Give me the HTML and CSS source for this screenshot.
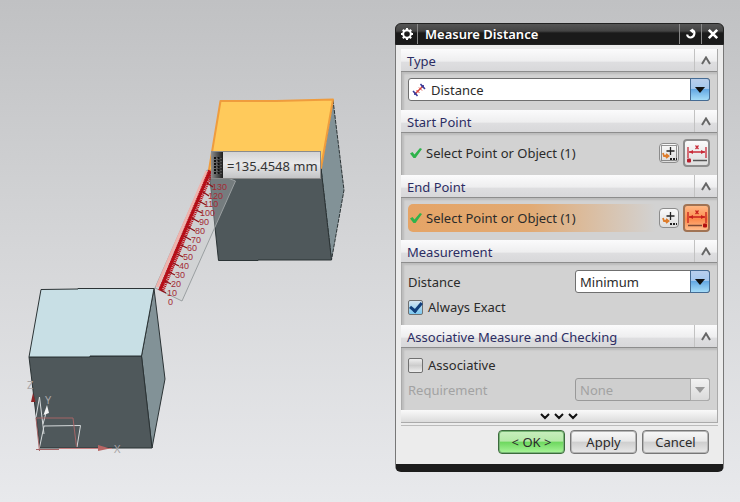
FILE: index.html
```
<!DOCTYPE html>
<html lang="en">
<head>
<meta charset="utf-8">
<title>Measure Distance</title>
<link rel="stylesheet" href="styles.css">
</head>
<body>
<main class="workspace">
  <svg class="scene" viewBox="0 0 395 502" preserveAspectRatio="xMinYMin meet" role="img" aria-label="Two solids with a measurement ruler">
    <defs>
      <linearGradient id="tag" x1="0" y1="0" x2="0" y2="1"><stop offset="0" stop-color="#d2d2d3"/><stop offset=".45" stop-color="#e9e9ea"/><stop offset="1" stop-color="#c2c3c5"/></linearGradient>
      <linearGradient id="grip" x1="0" y1="0" x2="1" y2="0"><stop offset="0" stop-color="#858585"/><stop offset="1" stop-color="#1d1d1d"/></linearGradient>
    </defs>
    <g stroke="#2b3335" stroke-width="1" stroke-linejoin="round">
      <path fill="#829297" stroke-dasharray="4 1" d="M333 100L344 190L331.500 260L321 168Z"/>
      <path fill="#4f585b" d="M209 170L321 168L331.500 260H258V260.500H218.500Z"/>
      <path fill="#ffca5b" stroke="#ef9c3d" stroke-width="2" d="M220.500 101H276L333 99.500L321 168L209 170Z"/>
      <path fill="#829297" d="M154 288.500L165 379L152 448L141.500 356Z"/>
      <path fill="#4f585b" d="M29 357L141.500 356L152 448H40Z"/>
      <path fill="#c8dfe5" d="M41 289.500L78 289V288.500H154L141.500 356H90V357H29Z"/>
    </g>
    <g fill="none" stroke="#d6dadb" stroke-width="1">
      <path d="M39 450L44 426L80.500 425.500L77 447M36 417L39.500 397L44 434M43 424L46 413"/>
    </g>
    <g fill="none" stroke="#a56566">
      <path d="M36 418H73L76.500 447M36 418L39.500 451M36 449.500H59"/>
      <path stroke="#c47f80" d="M59 448.500H112"/>
    </g>
    <path fill="#b76564" d="M98 445L110 448.500L98 451Z"/>
    <path fill="#8d2527" d="M33 393L35.500 402H31Z"/>
    <path fill="#f4f5f5" d="M47 405L49 413L43.500 415Z"/>
    <g class="axis"><text x="114" y="453">X</text><text x="45" y="404">Y</text><text x="27" y="389">Z</text></g>

    <path fill="#c7cacb" fill-opacity=".32" stroke="#9a9fa1" d="M207 170L235.500 181L182 301L155 288Z"/>
    <path fill="none" stroke="#f0b3ad" stroke-width="3" d="M207 171L157 287"/>
    <path fill="none" stroke="#a80c14" stroke-width="3" d="M210 171L160 290"/>
    <path fill="none" stroke="#bd101a" stroke-width="6" stroke-dasharray="1.200 .7" d="M211 171L161 291"/>
    <path fill="none" stroke="#8a1119" stroke-width="1.300" d="M161 290L166 293M165 281L171 284M169 272L175 275M173 263L179 266M177 254L183 257M181 245L187 248M184 236L191 240M188 227L195 231M192 218L199 222M196 210L202 213M199 201L206 205M203 192L209 196M207 183L213 187"/>
    <g class="ticks">
      <text x="168" y="305">0</text><text x="167" y="296">10</text><text x="171" y="287">20</text><text x="175" y="278">30</text><text x="179" y="269">40</text><text x="183" y="260">50</text><text x="187" y="251">60</text><text x="191" y="243">70</text><text x="195" y="234">80</text><text x="199" y="225">90</text><text x="200" y="216">100</text><text x="204" y="207">110</text><text x="208" y="199">120</text><text x="212" y="190">130</text>
    </g>
    <rect x="211.500" y="151.500" width="109" height="27" fill="url(#tag)" stroke="#8b8b8b"/>
    <rect x="212" y="152" width="11" height="26" fill="url(#grip)"/>
    <path stroke="#111" stroke-width="2" stroke-dasharray="2 1" d="M215 157V174M218.500 157V174"/>
    <path stroke="#777" stroke-width="1" stroke-dasharray="1 2" d="M217 158V174M221 158V174"/>
    <text class="readout" x="227" y="171">=135.4548 mm</text>
  </svg>

  <form class="dialog">
    <header class="titlebar">
      <button type="button" class="tb-btn gear" aria-label="Options">
        <svg width="14" height="14" viewBox="0 0 14 14"><circle cx="7" cy="7" r="3.800" fill="none" stroke="#fff" stroke-width="2"/><path stroke="#fff" stroke-width="2" d="M7 1V3M7 11V13M1 7H3M11 7H13M2.800 2.800L4.200 4.200M9.800 9.800L11.200 11.200M11.200 2.800L9.800 4.200M4.200 9.800L2.800 11.200"/></svg>
      </button>
      <h1>Measure Distance</h1>
      <button type="button" class="tb-btn" aria-label="Reset">
        <svg width="12" height="12" viewBox="0 0 12 12"><path fill="none" stroke="#fff" stroke-width="2.200" d="M6.500 2.500H8C10.500 4 9.500 9.500 5.500 9.500C3.500 9.500 2.200 8 2.200 6.500"/><path fill="#fff" d="M4.500 2.500L8 .500V5.500Z"/></svg>
      </button>
      <button type="button" class="tb-btn" aria-label="Close">
        <svg width="12" height="12" viewBox="0 0 12 12"><path stroke="#fff" stroke-width="2.600" d="M1.800 1.800L10.200 10.200M10.200 1.800L1.800 10.200"/></svg>
      </button>
    </header>

    <div class="sheet">
      <section>
        <div class="head"><h2>Type</h2><button type="button" class="fold" aria-label="Collapse Type"><svg width="10" height="9" viewBox="0 0 10 9"><path d="M1 8L5 1.500L9 8"/></svg></button></div>
        <div class="group type">
          <span class="combo">
            <svg class="lead" width="14" height="14" viewBox="0 0 14 14"><path stroke="#3a3a9a" stroke-width="1.500" d="M1 8L5.500 13M8.500 1L13 6"/><path stroke="#d8453c" stroke-width="1.500" d="M3 11L11 3"/><path stroke="#d8453c" d="M4.500 7L7.500 10M7 4.500L10 7.500"/><path fill="#3a3a9a" d="M2 12L2.500 8.500L5.500 11.500ZM12 2L8.500 2.500L11.500 5.500Z"/></svg>
            <select class="with-icon" aria-label="Type"><option>Distance</option></select>
            <span class="arrow"><svg width="10" height="6" viewBox="0 0 10 6"><path d="M0 0H10L5 6Z"/></svg></span>
          </span>
        </div>
      </section>

      <section>
        <div class="head"><h2>Start Point</h2><button type="button" class="fold" aria-label="Collapse Start Point"><svg width="10" height="9" viewBox="0 0 10 9"><path d="M1 8L5 1.500L9 8"/></svg></button></div>
        <div class="group">
          <div class="pick">
            <svg class="check" width="12" height="12" viewBox="0 0 12 12"><path d="M0 6.500L2.500 5L4.500 7.500L10 1L12 2L5.500 11H3.500Z"/></svg>
            <span class="pick-text">Select Point or Object (1)</span>
            <button type="button" class="tool small" aria-label="Point dialog">
              <svg width="18" height="18" viewBox="0 0 18 18"><rect x="1.500" y="1.500" width="15" height="15" fill="none" stroke="#333" stroke-dasharray="1 1"/><path stroke="#222" stroke-width="1.300" d="M10.500 3V11M6.500 7H14.500"/><path fill="none" stroke="#de7d2c" stroke-width="1.800" d="M3 9L4 12H8M6 14L8.500 12L6 10"/><path stroke="#222" stroke-width="2" stroke-dasharray="2 1" d="M10 15H17"/></svg>
            </button>
            <button type="button" class="tool" aria-label="Start point">
              <svg width="24" height="24" viewBox="0 0 24 24"><path fill="none" stroke="#c92b39" stroke-width="1.300" d="M3 6V17M21 6V17M4 11H20"/><path fill="#c92b39" d="M4 11L8 9V13ZM20 11L16 9V13Z"/><path stroke="#c92b39" stroke-width="1.200" d="M10.500 4.500L13.500 8M13.500 4.500L10.500 8"/><rect x="2" y="17.500" width="4" height="4" rx="1" fill="#b81d2c"/><path stroke="#555" stroke-width="1.500" d="M8 19.500H22"/></svg>
            </button>
          </div>
        </div>
      </section>

      <section>
        <div class="head"><h2>End Point</h2><button type="button" class="fold" aria-label="Collapse End Point"><svg width="10" height="9" viewBox="0 0 10 9"><path d="M1 8L5 1.500L9 8"/></svg></button></div>
        <div class="group">
          <div class="pick active">
            <svg class="check" width="12" height="12" viewBox="0 0 12 12"><path d="M0 6.500L2.500 5L4.500 7.500L10 1L12 2L5.500 11H3.500Z"/></svg>
            <span class="pick-text">Select Point or Object (1)</span>
            <button type="button" class="tool small" aria-label="Point dialog">
              <svg width="18" height="18" viewBox="0 0 18 18"><path stroke="#222" stroke-width="1.300" d="M10.500 3V11M6.500 7H14.500"/><path fill="none" stroke="#de7d2c" stroke-width="1.800" d="M3 9L4 12H8M6 14L8.500 12L6 10"/><path stroke="#222" stroke-width="2" stroke-dasharray="2 1" d="M10 15H17"/></svg>
            </button>
            <button type="button" class="tool on" aria-label="End point">
              <svg width="24" height="24" viewBox="0 0 24 24"><path fill="none" stroke="#c7201c" stroke-width="1.300" d="M3 6V17M21 6V17M4 11H20"/><path fill="#c7201c" d="M4 11L8 9V13ZM20 11L16 9V13Z"/><path stroke="#c7201c" stroke-width="1.200" d="M10.500 4.500L13.500 8M13.500 4.500L10.500 8"/><rect x="18" y="17.500" width="4" height="4" rx="1" fill="#b3100f"/><path stroke="#7d4a35" stroke-width="1.500" d="M3 19.500H17"/></svg>
            </button>
          </div>
        </div>
      </section>

      <section>
        <div class="head"><h2>Measurement</h2><button type="button" class="fold" aria-label="Collapse Measurement"><svg width="10" height="9" viewBox="0 0 10 9"><path d="M1 8L5 1.500L9 8"/></svg></button></div>
        <div class="group measure">
          <div class="row">
            <label for="distance">Distance</label>
            <span class="combo half">
              <select id="distance"><option>Minimum</option></select>
              <span class="arrow"><svg width="10" height="6" viewBox="0 0 10 6"><path d="M0 0H10L5 6Z"/></svg></span>
            </span>
          </div>
          <label class="tick"><input type="checkbox" checked>Always Exact</label>
        </div>
      </section>

      <section>
        <div class="head"><h2>Associative Measure and Checking</h2><button type="button" class="fold" aria-label="Collapse Associative Measure and Checking"><svg width="10" height="9" viewBox="0 0 10 9"><path d="M1 8L5 1.500L9 8"/></svg></button></div>
        <div class="group assoc">
          <label class="tick"><input type="checkbox">Associative</label>
          <div class="row off">
            <label for="requirement">Requirement</label>
            <span class="combo half">
              <select id="requirement" disabled><option>None</option></select>
              <span class="arrow"><svg width="10" height="6" viewBox="0 0 10 6"><path d="M0 0H10L5 6Z"/></svg></span>
            </span>
          </div>
        </div>
      </section>
      <button type="button" class="more" aria-label="More options"><svg width="38" height="7" viewBox="0 0 38 7"><path d="M1 1L5 5L9 1M15 1L19 5L23 1M29 1L33 5L37 1"/></svg></button>
    </div>

    <footer class="actions">
      <button type="button" class="action ok">&lt; OK &gt;</button>
      <button type="button" class="action">Apply</button>
      <button type="button" class="action">Cancel</button>
    </footer>
  </form>
</main>
</body>
</html>
```
FILE: styles.css
```
* { box-sizing: border-box; }

body {
  margin: 0;
  font: 13px/18px "Noto Sans", "Open Sans", sans-serif;
  color: #2b2b2b;
}

button, select, input { font: inherit; color: inherit; margin: 0; }
button { padding: 0; border: 0; background: none; }
h1, h2 { margin: 0; font-size: inherit; }
svg { display: block; }

.workspace {
  display: flex;
  align-items: flex-start;
  min-height: 100vh;
  padding-right: 16px;
  background: linear-gradient(#c0c1c3, #d5d6d8 50%, #e8e9ec);
}

.scene { flex: 1; min-width: 0; }
.axis { font: 11px "Noto Sans", sans-serif; fill: #a9a6a7; }
.ticks { font: 9px "Liberation Sans", sans-serif; fill: #a32a35; }
.readout { font: 13px "Noto Sans", sans-serif; fill: #333; }

.dialog {
  flex: 0 0 329px;
  margin-top: 23px;
  border: solid #777;
  border-width: 0 1px;
  border-bottom: 8px solid #1c1c1c;
  border-radius: 6px;
  background: #ececec;
}

.titlebar {
  display: flex;
  align-items: stretch;
  height: 22px;
  margin: 0 -1px;
  border: 1px solid #222;
  border-radius: 6px 6px 0 0;
  background: linear-gradient(#555 0, #444 35%, #1a1a1a 45%, #1a1a1a);
  color: #fff;
}
.titlebar h1 { flex: 1; padding-left: 7px; line-height: 20px; font-weight: 600; }
.tb-btn { display: grid; place-items: center; width: 22px; border-left: 1px solid #888; }
.tb-btn.gear { border-left: 0; border-right: 1px solid #888; }

.sheet { margin: 4px 5px 0; border-right: 1px solid #aaa; }

.head {
  display: flex;
  height: 23px;
  border-bottom: 1px solid #8d8d8d;
  background: linear-gradient(#fbfbfc, #eeeeef 55%, #dedee0 60%, #d8d8da);
}
.head h2 { flex: 1; padding-left: 6px; line-height: 24px; font-weight: 400; color: #2c2d63; }
.fold { display: grid; place-items: center; width: 23px; border-left: 1px solid #c2c2c2; }
.fold path { fill: none; stroke: #666; stroke-width: 2; }

.group {
  padding: 6px 7px 8px 6px;
  border-left: 1px solid #aaa;
  background: #d2d2d2;
  box-shadow: inset 2px 2px 2px #bcbcbc;
}
.group.type { padding-bottom: 9px; }

.combo { position: relative; display: flex; height: 23px; }
.combo select {
  flex: 1;
  min-width: 0;
  padding: 0 24px 0 4px;
  appearance: none;
  border: 1px solid #6f6f6f;
  border-radius: 3px;
  background: #fff;
}
.combo select.with-icon { padding-left: 22px; }
.lead { position: absolute; left: 4px; top: 5px; }
.arrow {
  position: absolute;
  inset: 0 0 0 auto;
  display: grid;
  place-items: center;
  width: 20px;
  border: 1px solid #456b93;
  border-radius: 0 3px 3px 0;
  background: linear-gradient(#b9cfec, #a5c8ee 45%, #64a8e3 50%, #a5dcf8);
  pointer-events: none;
}
.arrow path { fill: #111; }
.half { flex: 0 0 135px; }

.pick { display: flex; align-items: center; height: 28px; padding-left: 2px; border-radius: 5px; }
.pick.active { background: linear-gradient(90deg, #e5a466, #e2aa73 40%, #d2d2d2 82%); }
.check path { fill: #2eb34b; }
.pick-text { flex: 1; padding-left: 4px; white-space: nowrap; }
.tool {
  display: grid;
  place-items: center;
  width: 27px;
  height: 28px;
  border: 2px solid #8c8c8c;
  border-radius: 4px;
  background: linear-gradient(#fafafa, #ddd);
}
.tool.small { width: 20px; height: 20px; margin-right: 4px; border-width: 1px; }
.tool.on { border-color: #a07354; background: linear-gradient(#ffb783, #fb8b4c 55%, #ffbc8c); }

.measure { padding-top: 7px; padding-bottom: 9px; }
.row { display: flex; align-items: center; justify-content: space-between; }
.tick { display: flex; align-items: center; gap: 5px; height: 18px; }
.measure .tick { margin-top: 5px; }
.tick input {
  width: 15px;
  height: 15px;
  appearance: none;
  border: 1px solid #707070;
  border-radius: 2px;
  background: linear-gradient(#eee, #ccc 50%, #eee);
}
.tick input:checked {
  background: linear-gradient(#d5e4f0, #7cc8f0);
  display: grid;
  place-items: center;
}
.tick input:checked::before {
  content: "";
  width: 5px;
  height: 9px;
  margin-top: -3px;
  border: solid #123f7c;
  border-width: 0 3px 3px 0;
  transform: rotate(40deg);
}

.assoc { padding-top: 8px; padding-bottom: 9px; }
.assoc .row { margin-top: 4px; }
.off { color: #a2a2a2; }
.off select { background: #cfcfcf; border-color: #999; opacity: 1; }
.off .arrow { border-color: #aaa; background: linear-gradient(#f2f2f2, #dadada); }
.off .arrow path { fill: #999; }

.more {
  display: grid;
  place-items: center;
  width: 100%;
  height: 13px;
  border-bottom: 1px solid #aaa;
  background: linear-gradient(#fafafa, #dcdcdc);
}
.more path { fill: none; stroke: #111; stroke-width: 2; }

.actions {
  display: flex;
  justify-content: flex-end;
  gap: 5px;
  margin: 2px 5px 0;
  padding: 4px 9px 10px;
  border-top: 1px solid #bbb;
}
.action {
  width: 67px;
  height: 24px;
  border: 1px solid #777;
  border-radius: 4px;
  background: linear-gradient(#f8f8f8, #e8e8e8 45%, #cfcfcf 52%, #e8e8e8);
  box-shadow: inset 0 0 0 1px #b5b5b5;
}
.action.ok {
  border-color: #3c6b3c;
  background: linear-gradient(#c8efbe, #b5e9a8 45%, #6fd860 52%, #aaf59a);
  box-shadow: inset 0 0 0 1px #79b777;
}
```
